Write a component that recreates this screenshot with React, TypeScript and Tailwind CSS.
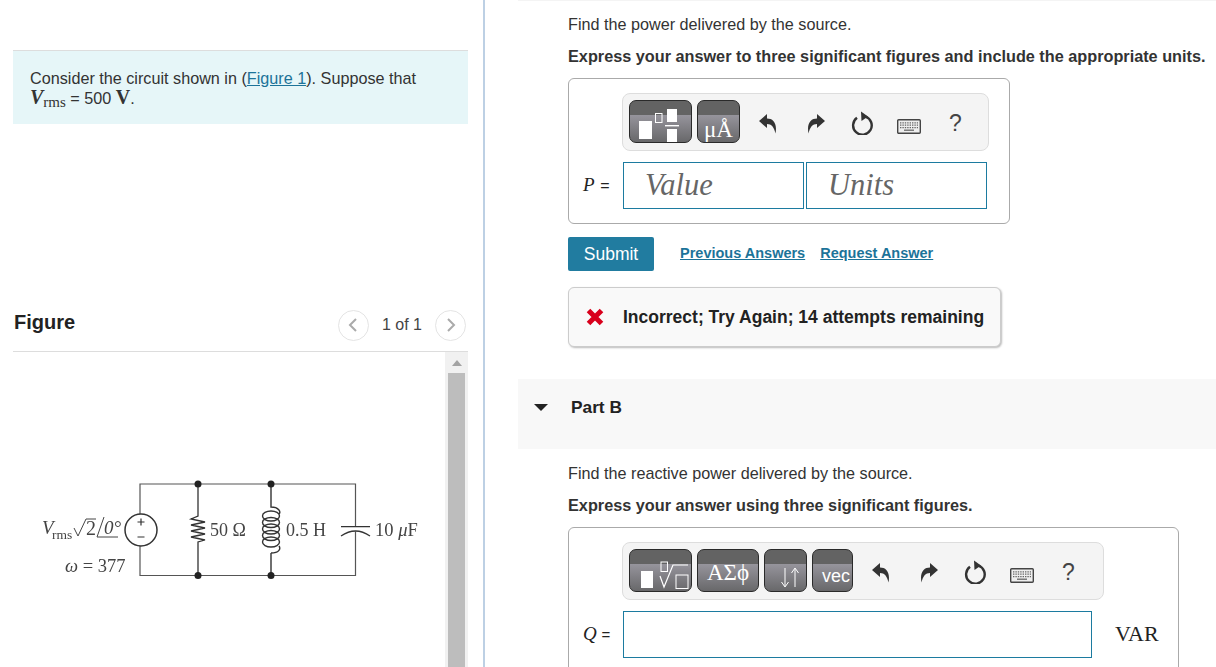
const serif = "[font-family:'Liberation_Serif',serif]";

const btn =
  "relative shrink-0 h-[43px] rounded-[7px] border border-[#2a2a2a] overflow-hidden bg-[linear-gradient(#636363_0,#636363_33%,#97959d_33%,#68686a_100%)]";

const UndoIcon = ({ flip = false }: { flip?: boolean }) => (
  <svg width="18" height="21" viewBox="0 0 18 21" className={flip ? "-scale-x-100" : ""}>
    <path d="M0 8 L8 1 V5.5 C14 5.5 18.5 10 16.5 20.5 C15 14 12.5 11 8 11 V15 Z" fill="#333" />
  </svg>
);

const RefreshIcon = () => (
  <svg width="22" height="24" viewBox="0 0 22 24">
    <path d="M6 6.8 A9.3 9.3 0 1 0 14.5 5.6" fill="none" stroke="#333" strokeWidth="2.4" />
    <path d="M10 0.5 L17 5.5 L10.5 10 Z" fill="#333" />
  </svg>
);

const KeyboardIcon = () => (
  <svg width="24" height="15" viewBox="0 0 24 15">
    <rect x="0.7" y="0.7" width="22.6" height="13.6" rx="1" fill="#eee" stroke="#444" strokeWidth="1.4" />
    <path d="M3 3.8 H21 M3 6.2 H21 M3 8.6 H21" stroke="#666" strokeWidth="1.2" strokeDasharray="1.4 1" />
    <path d="M7 11.2 H17" stroke="#666" strokeWidth="1.3" />
  </svg>
);

const ToolIcons = () => (
  <div className="-mt-[4px] ml-[19px] flex items-center self-center">
    <UndoIcon />
    <span className="ml-[30px]">
      <UndoIcon flip />
    </span>
    <span className="ml-[26px]">
      <RefreshIcon />
    </span>
    <span className="ml-[24px] mt-[6px]">
      <KeyboardIcon />
    </span>
    <span className="ml-[28px] text-[23px] leading-none text-[#444]">?</span>
  </div>
);

const Circuit = () => (
  <svg width="430" height="130" viewBox="0 0 430 130" className="-ml-[13px] blur-[0.4px]">
    <g fill="none" stroke="#555" strokeWidth="1.2">
      <path d="M140 60 V30 H355.5 V121.5 H140 V92" />
      <circle cx="141" cy="76" r="16" strokeWidth="1.5" stroke="#333" />
      <path d="M198 30 V62 L191 65 L205 68 L191 71 L205 74 L191 77 L205 80 L191 83 L205 86 L198 88 V121" stroke="#333" strokeWidth="1.3" />
      <path d="M271 30 V53 C279 53 281 58 279 60 M271 99 C279 99 281 95 279 92 M271 99 V121" stroke="#333" strokeWidth="1.4" />
      <g stroke="#333" strokeWidth="1.4">
        <ellipse cx="271" cy="62" rx="8.5" ry="5" />
        <ellipse cx="271" cy="68.5" rx="8.5" ry="5" />
        <ellipse cx="271" cy="75" rx="8.5" ry="5" />
        <ellipse cx="271" cy="81.5" rx="8.5" ry="5" />
        <ellipse cx="271" cy="88" rx="8.5" ry="5" />
      </g>
    </g>
    <path d="M341 75 H370" stroke="#fff" strokeWidth="5" />
    <path d="M341 72.7 H370 M341 82 Q355.5 72 370 82" fill="none" stroke="#333" strokeWidth="1.3" />
    <g fill="#222">
      <circle cx="198" cy="30" r="3.5" />
      <circle cx="271" cy="30" r="3.5" />
      <circle cx="198" cy="121.5" r="3.5" />
      <circle cx="271" cy="121.5" r="3.5" />
    </g>
    <path d="M137.5 68 H144.5 M141 64.5 V71.5 M137.5 83 H144.5" stroke="#333" strokeWidth="1.2" />
    <g fill="#444" fontFamily="'Liberation Serif', serif" fontSize="18">
      <text x="42" y="80" fontSize="19" fontStyle="italic">V</text>
      <text x="52" y="85" fontSize="13.5">rms</text>
      <text x="86" y="81" fontSize="20">2</text>
      <path d="M74 74 L78 82 L86 65 H96" fill="none" stroke="#444" strokeWidth="1" />
      <path d="M104 63 L97 83 H118" fill="none" stroke="#444" strokeWidth="1" />
      <text x="104" y="80" fontSize="19" fontStyle="italic">0°</text>
      <text x="65" y="118" fontSize="18.5"><tspan fontStyle="italic">ω</tspan> = 377</text>
      <text x="210" y="82">50 Ω</text>
      <text x="286" y="82">0.5 H</text>
      <text x="375" y="82" fontSize="18.5">10 <tspan fontStyle="italic">μ</tspan>F</text>
    </g>
  </svg>
);

export default function App() {
  return (
    <div className="flex h-[667px] w-[1216px] overflow-hidden bg-white font-['Liberation_Sans',sans-serif] text-[16.2px] text-[#333]">
      {/* left column, question text and figure */}
      <div className="w-[485px] shrink-0 border-r-2 border-[#bdd0e4] pl-[13px] pr-[15px] pt-[50px]">
        <div className="h-[74px] border-t border-[#dddddd] bg-[#e6f6f8] pl-[17px] pt-[17px] leading-[20px]">
          <div>
            Consider the circuit shown in (<span className="text-[#1c7399] underline">Figure 1</span>). Suppose that
          </div>
          <div className="-mt-[1px]">
            <span className={`${serif} text-[20px] font-bold`}>
              <i>V</i>
              <sub className="-bottom-[3px] text-[15px] font-normal">rms</sub>
            </span>{" "}
            = 500 <span className={`${serif} text-[20px] font-bold`}>V</span>.
          </div>
        </div>

        <div className="mt-[181px] flex h-[47px] items-center justify-between border-b border-[#dddddd] pb-[8px] pl-[1px]">
          <span className="mb-[4px] text-[20px] font-bold text-[#222]">Figure</span>
          <div className="mt-[2px] flex items-center">
            <span className="flex h-[31px] w-[31px] items-center justify-center rounded-full border border-[#e4e4e4]">
              <svg width="10" height="16" viewBox="0 0 10 16">
                <path d="M8 2 L2 8 L8 14" fill="none" stroke="#aaa" strokeWidth="2" />
              </svg>
            </span>
            <span className="mx-[13px] text-[16px] text-[#444]">1 of 1</span>
            <span className="mr-[2px] flex h-[31px] w-[31px] items-center justify-center rounded-full border border-[#e4e4e4]">
              <svg width="10" height="16" viewBox="0 0 10 16">
                <path d="M2 2 L8 8 L2 14" fill="none" stroke="#aaa" strokeWidth="2" />
              </svg>
            </span>
          </div>
        </div>

        <div className="flex h-[320px]">
          <div className="flex-1 pt-[102px]">
            <Circuit />
          </div>
          <div className="flex w-[23px] flex-col items-center bg-[#f1f1f1]">
            <div className="mb-[7px] mt-[8px] h-0 w-0 border-x-[5px] border-b-[6px] border-x-transparent border-b-[#a3a3a3]" />
            <div className="w-[17px] flex-1 bg-[#bdbdbd]" />
          </div>
        </div>
      </div>

      {/* right column, answer parts */}
      <div className="flex-1">
        <div className="ml-[33px] h-px bg-[#f4f4f4]" />
        <div className="pl-[83px] pt-[14px]">
          <p className="leading-[18px]">Find the power delivered by the source.</p>
          <p className="mt-[14px] whitespace-nowrap text-[16.25px] font-bold leading-[18px]">
            Express your answer to three significant figures and include the appropriate units.
          </p>

          <div className="mt-[13px] h-[146px] w-[442px] rounded-[6px] border border-[#aaaaaa] pl-[53px] pt-[14px]">
            <div className="flex h-[58px] w-[367px] items-start rounded-[8px] border border-[#dddddd] bg-[#f4f4f4] pl-[6px] pt-[6px]">
              <div className={`${btn} w-[63px]`}>
                <svg width="61" height="41" viewBox="0 0 61 41">
                  <g fill="#fff">
                    <rect x="9" y="20" width="13" height="18" />
                    <rect x="37" y="8" width="10" height="13" />
                    <rect x="35" y="24" width="14" height="1.4" />
                    <rect x="37" y="28" width="10" height="13" />
                  </g>
                  <rect x="25.5" y="12.5" width="6.5" height="9" fill="none" stroke="#fff" strokeWidth="1" />
                </svg>
              </div>
              <div className={`${btn} ml-[5px] flex w-[43px] items-end justify-center ${serif} text-[23px] leading-[24px] text-white`}>
                μÅ
              </div>
              <ToolIcons />
            </div>

            <div className="ml-[-39px] mt-[11px] flex items-center">
              <span className={`w-[40px] ${serif} whitespace-nowrap text-[19px] text-[#222]`}>
                <i>P</i> <span className="ml-[1px] font-['Liberation_Sans',sans-serif] text-[16px]">=</span>
              </span>
              <div className={`flex h-[47px] w-[181px] items-center border border-[#1c7ba0] pl-[21px] ${serif} text-[30.5px] italic text-[#666]`}>
                Value
              </div>
              <div className={`ml-[2px] flex h-[47px] w-[181px] items-center border border-[#1c7ba0] pl-[21px] ${serif} text-[30.5px] italic text-[#666]`}>
                Units
              </div>
            </div>
          </div>

          <div className="mt-[13px] flex items-center">
            <div className="flex h-[34px] w-[86px] items-center justify-center rounded-[2px] bg-[#217ca0] text-[17.5px] text-white">
              Submit
            </div>
            <span className="ml-[26px] text-[14.5px] font-bold text-[#1c7399] underline">Previous Answers</span>
            <span className="ml-[15px] text-[14.5px] font-bold text-[#1c7399] underline">Request Answer</span>
          </div>

          <div className="mt-[16px] flex h-[60px] w-[433px] items-center rounded-[6px] border border-[#cccccc] bg-[#f9f9f9] pl-[17px] shadow-[1px_1px_2px_#bbb]">
            <svg width="18" height="18" viewBox="0 0 18 18">
              <path d="M2.5 2.5 L15.5 15.5 M15.5 2.5 L2.5 15.5" stroke="#d8001c" strokeWidth="5" />
            </svg>
            <span className="ml-[19px] mt-[1px] whitespace-nowrap text-[17.5px] font-bold text-[#222]">
              Incorrect; Try Again; 14 attempts remaining
            </span>
          </div>
        </div>

        <div className="ml-[33px] mt-[32px] flex h-[70px] items-center bg-[#f8f8f8] pb-[13px] pl-[16px]">
          <div className="h-0 w-0 border-x-[7px] border-t-[7px] border-x-transparent border-t-[#222]" />
          <span className="ml-[23px] text-[17.3px] font-bold text-[#222]">Part B</span>
        </div>

        <div className="pl-[83px]">
          <p className="mt-[15px] leading-[18px]">Find the reactive power delivered by the source.</p>
          <p className="mt-[14px] text-[16.25px] font-bold leading-[18px]">Express your answer using three significant figures.</p>

          <div className="mt-[13px] h-[160px] w-[611px] rounded-[6px] border border-[#aaaaaa] pl-[53px] pt-[14px]">
            <div className="flex h-[58px] w-[482px] items-start rounded-[8px] border border-[#dddddd] bg-[#f4f4f4] pl-[6px] pt-[6px]">
              <div className={`${btn} w-[63px]`}>
                <svg width="61" height="41" viewBox="0 0 61 41">
                  <rect x="11" y="21" width="12" height="17" fill="#fff" />
                  <g fill="none" stroke="#fff" strokeWidth="1">
                    <rect x="31" y="12" width="6.5" height="9.5" />
                    <path d="M30 26 L34 37 L43 15 H58" strokeWidth="1.2" />
                    <rect x="46" y="25" width="12" height="13.5" />
                  </g>
                </svg>
              </div>
              <div className={`${btn} ml-[5px] flex w-[62px] items-end justify-center pb-[6px] ${serif} text-[23px] leading-[24px] text-white`}>
                ΑΣϕ
              </div>
              <div className={`${btn} ml-[5px] w-[43px]`}>
                <svg width="41" height="41" viewBox="0 0 41 41">
                  <path d="M20 18 V36 M16.5 32 L20 37 L23.5 32 M30 37 V19 M26.5 23 L30 18 L33.5 23" fill="none" stroke="#fff" strokeWidth="1" />
                </svg>
              </div>
              <div className={`${btn} ml-[5px] flex w-[41px] items-end justify-end pb-[5px] pr-[2px] text-[18px] leading-[20px] text-white`}>
                vec
              </div>
              <ToolIcons />
            </div>

            <div className="ml-[-39px] mt-[11px] flex items-center">
              <span className={`w-[40px] ${serif} whitespace-nowrap text-[19px] text-[#222]`}>
                <i>Q</i> <span className="font-['Liberation_Sans',sans-serif] text-[15px]">=</span>
              </span>
              <div className="h-[47px] w-[469px] border border-[#1c7ba0]" />
              <span className={`ml-[23px] pb-[2px] ${serif} text-[22px] text-[#222]`}>VAR</span>
            </div>
          </div>
        </div>
      </div>
    </div>
  );
}
